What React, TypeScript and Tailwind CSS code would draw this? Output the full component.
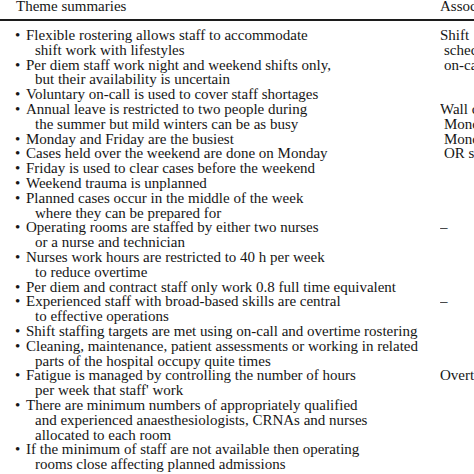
const groups: { left: string[][]; right: string[] }[] = [
  {
    left: [
      ["Flexible rostering allows staff to accommodate", "shift work with lifestyles"],
      ["Per diem staff work night and weekend shifts only,", "but their availability is uncertain"],
      ["Voluntary on-call is used to cover staff shortages"],
    ],
    right: ["Shift", "scheduling and", "on-call"],
  },
  {
    left: [
      ["Annual leave is restricted to two people during", "the summer but mild winters can be as busy"],
      ["Monday and Friday are the busiest"],
      ["Cases held over the weekend are done on Monday"],
      ["Friday is used to clear cases before the weekend"],
      ["Weekend trauma is unplanned"],
      ["Planned cases occur in the middle of the week", "where they can be prepared for"],
    ],
    right: ["Wall chart", "Monday lists", "Monday cases", "OR schedule"],
  },
  {
    left: [
      ["Operating rooms are staffed by either two nurses", "or a nurse and technician"],
      ["Nurses work hours are restricted to 40 h per week", "to reduce overtime"],
      ["Per diem and contract staff only work 0.8 full time equivalent"],
    ],
    right: ["–"],
  },
  {
    left: [
      ["Experienced staff with broad-based skills are central", "to effective operations"],
      ["Shift staffing targets are met using on-call and overtime rostering"],
      ["Cleaning, maintenance, patient assessments or working in related", "parts of the hospital occupy quite times"],
    ],
    right: ["–"],
  },
  {
    left: [
      ["Fatigue is managed by controlling the number of hours", "per week that staff' work"],
      ["There are minimum numbers of appropriately qualified", "and experienced anaesthesiologists, CRNAs and nurses", "allocated to each room"],
      ["If the minimum of staff are not available then operating", "rooms close affecting planned admissions"],
    ],
    right: ["Overtime"],
  },
];

export default function App() {
  return (
    <div
      className="w-[474px] h-[474px] overflow-hidden bg-white text-[#161616] text-[15px]"
      style={{ fontFamily: '"Liberation Serif", "Times New Roman", serif' }}
    >
      {/* Header */}
      <div className="grid grid-cols-[440px_1fr] h-[21px] leading-[13px] border-b-2 border-[#1c1c1c] whitespace-nowrap">
        <div className="pl-[16px]">Theme summaries</div>
        <div className="overflow-hidden">Associated tools</div>
      </div>

      {/* Body */}
      <div className="pt-[7px] leading-[14.8px] whitespace-nowrap">
        {groups.map((g, gi) => (
          <div key={gi} className="grid grid-cols-[440px_1fr]">
            <div>
              {g.left.map((item, ii) => (
                <div key={ii} className="flex">
                  <span className="w-[26px] pl-[15px] shrink-0">•</span>
                  <div>
                    {item.map((line, li) => (
                      <div key={li} className={li > 0 ? "pl-[9px]" : ""}>
                        {line}
                      </div>
                    ))}
                  </div>
                </div>
              ))}
            </div>
            <div className="overflow-hidden">
              {g.right.map((line, li) => (
                <div key={li} className={li > 0 ? "pl-[4px]" : ""}>
                  {line}
                </div>
              ))}
            </div>
          </div>
        ))}
      </div>
    </div>
  );
}
